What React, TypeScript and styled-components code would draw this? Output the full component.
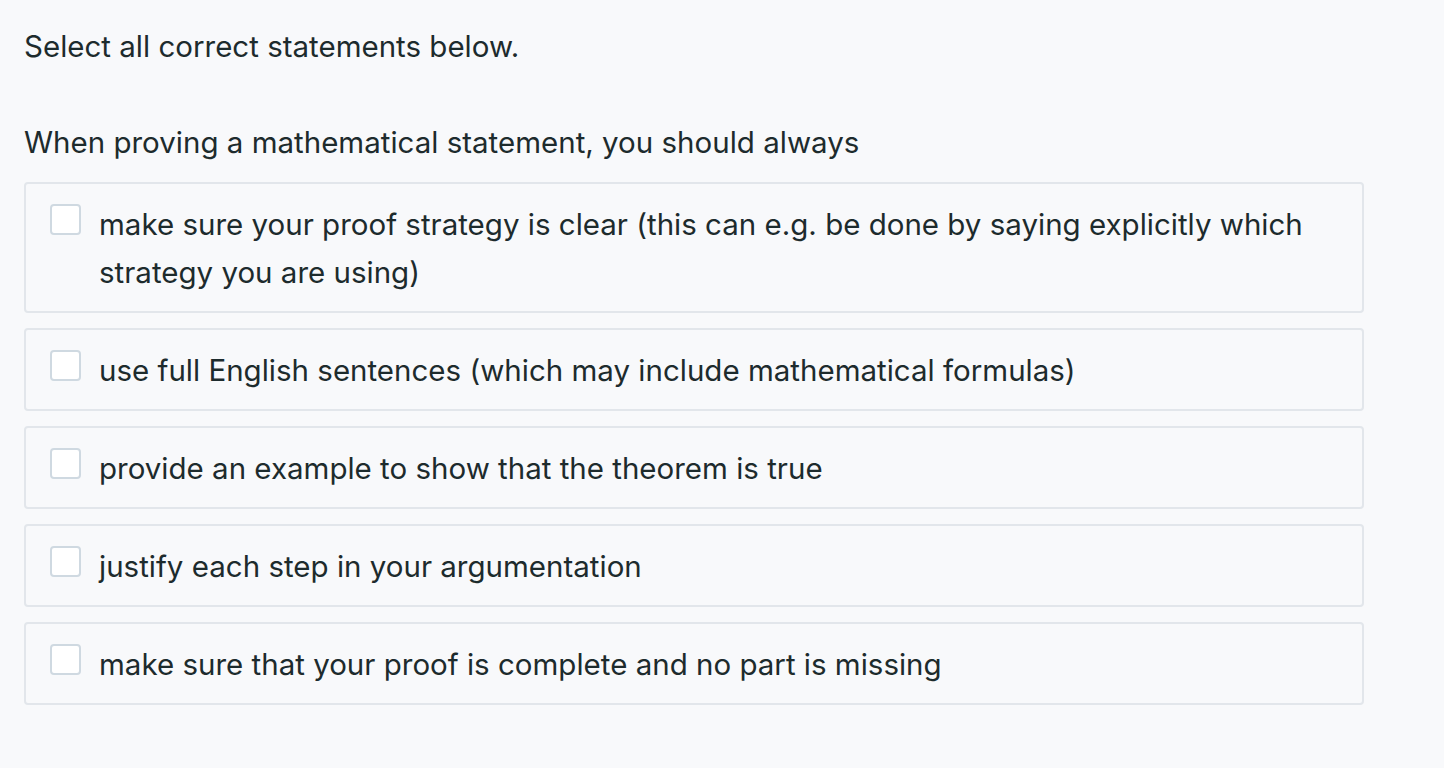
import styled, { createGlobalStyle } from 'styled-components';
import { FC } from 'react';

const statements = [
    'make sure your proof strategy is clear (this can e.g. be done by saying explicitly which strategy you are using)',
    'use full English sentences (which may include mathematical formulas)',
    'provide an example to show that the theorem is true',
    'justify each step in your argumentation',
    'make sure that your proof is complete and no part is missing',
];

const GlobalStyle = createGlobalStyle`
    html, body {
        margin: 0;
        background: #f8f9fb;
    }
    body {
        font-family: Inter, 'Liberation Sans', sans-serif;
        color: #1d2b2d;
    }
`;

const App: FC = () => (
    <Page>
        <GlobalStyle />
        <Prompt>Select all correct statements below.</Prompt>
        <Question>When proving a mathematical statement, you should always</Question>
        <OptionList>
            {statements.map((text) => (
                <Option key={text}>
                    <Box type='checkbox' />
                    <Label>{text}</Label>
                </Option>
            ))}
        </OptionList>
    </Page>
);

const Page = styled.div({
    padding: '22px 80px 40px 24px',
    fontSize: '29.5px',
});

const Prompt = styled.p({
    margin: 0,
    lineHeight: '48px',
});

const Question = styled.p({
    margin: '48px 0 16px',
    lineHeight: '48px',
});

const OptionList = styled.div({
    display: 'flex',
    flexDirection: 'column',
    gap: '15px',
});

const Option = styled.label({
    display: 'flex',
    alignItems: 'flex-start',
    gap: '18px',
    width: '1340px',
    boxSizing: 'border-box',
    padding: '15.5px 24px',
    border: '2px solid #e2e6eb',
    borderRadius: '4px',
    background: '#f8f9fb',
    cursor: 'pointer',
});

const Box = styled.input({
    appearance: 'none',
    flex: 'none',
    width: '31px',
    height: '31px',
    margin: '4.5px 0 0',
    border: '2px solid #cfd9e1',
    borderRadius: '4px',
    background: '#ffffff',
    boxSizing: 'border-box',
});

const Label = styled.span({
    lineHeight: '48px',
});

export default App;
